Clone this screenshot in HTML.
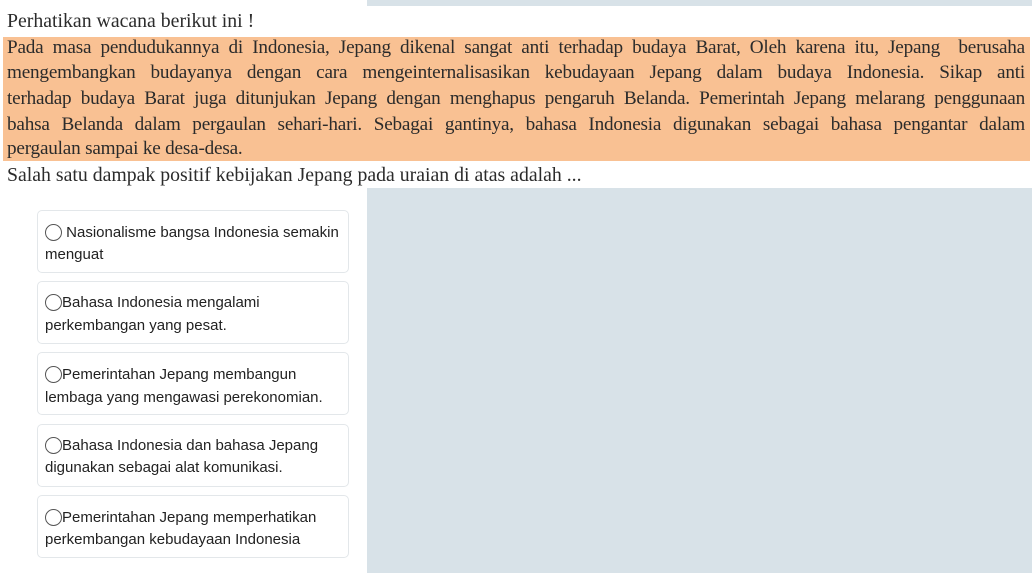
<!DOCTYPE html>
<html><head><meta charset="utf-8"><style>
body{margin:0;width:1032px;height:573px;background:#fff;position:relative;overflow:hidden;font-family:"Liberation Serif",serif;color:#2b2b2b}
.g{position:absolute;background:#d8e2e8}
.t{position:absolute;left:7px;font-size:19.8px;white-space:nowrap;line-height:24px}
.box{position:absolute;left:3px;top:37px;width:1027px;height:124px;background:#f9c193}
.l{position:absolute;left:7px;width:1018px;font-size:19.2px;letter-spacing:-0.2px;text-align:justify;text-align-last:justify;white-space:nowrap;height:24px;line-height:24px}
.l.last{text-align-last:left}
.o{position:absolute;left:37px;width:312px;height:63px;border:1px solid #e3e7ea;border-radius:5px;background:#fff;font-family:"Liberation Sans",sans-serif;font-size:15px;color:#222;box-sizing:border-box}
.o div{position:absolute;left:7px;white-space:nowrap;line-height:22px}
.r{display:inline-block;width:17px;height:17px;border:1px solid #555;border-radius:50%;vertical-align:-4px;box-sizing:border-box}
</style></head><body>
<div class="g" style="left:367px;top:0;width:665px;height:6px"></div>
<div class="g" style="left:367px;top:188px;width:665px;height:385px"></div>
<div class="t" style="top:9px">Perhatikan wacana berikut ini !</div>
<div class="box"></div>
<div class="l" style="top:36px">Pada masa pendudukannya di Indonesia, Jepang dikenal sangat anti terhadap budaya Barat, Oleh karena itu, Jepang&nbsp; berusaha</div>
<div class="l" style="top:61px">mengembangkan budayanya dengan cara mengeinternalisasikan kebudayaan Jepang dalam budaya Indonesia. Sikap anti</div>
<div class="l" style="top:87px">terhadap budaya Barat juga ditunjukan Jepang dengan menghapus pengaruh Belanda. Pemerintah Jepang melarang penggunaan</div>
<div class="l" style="top:113px">bahsa Belanda dalam pergaulan sehari-hari. Sebagai gantinya, bahasa Indonesia digunakan sebagai bahasa pengantar dalam</div>
<div class="l last" style="top:137px">pergaulan sampai ke desa-desa.</div>
<div class="t" style="top:163px">Salah satu dampak positif kebijakan Jepang pada uraian di atas adalah ...</div>

<div class="o" style="top:210px"><div style="top:11px"><span class="r"></span> Nasionalisme bangsa Indonesia semakin</div><div style="top:33px">menguat</div></div>
<div class="o" style="top:281px"><div style="top:10px"><span class="r"></span>Bahasa Indonesia mengalami</div><div style="top:33px">perkembangan yang pesat.</div></div>
<div class="o" style="top:352px"><div style="top:11px"><span class="r"></span>Pemerintahan Jepang membangun</div><div style="top:34px">lembaga yang mengawasi perekonomian.</div></div>
<div class="o" style="top:424px"><div style="top:10px"><span class="r"></span>Bahasa Indonesia dan bahasa Jepang</div><div style="top:32px">digunakan sebagai alat komunikasi.</div></div>
<div class="o" style="top:495px"><div style="top:11px"><span class="r"></span>Pemerintahan Jepang memperhatikan</div><div style="top:33px">perkembangan kebudayaan Indonesia</div></div>
</body></html>
